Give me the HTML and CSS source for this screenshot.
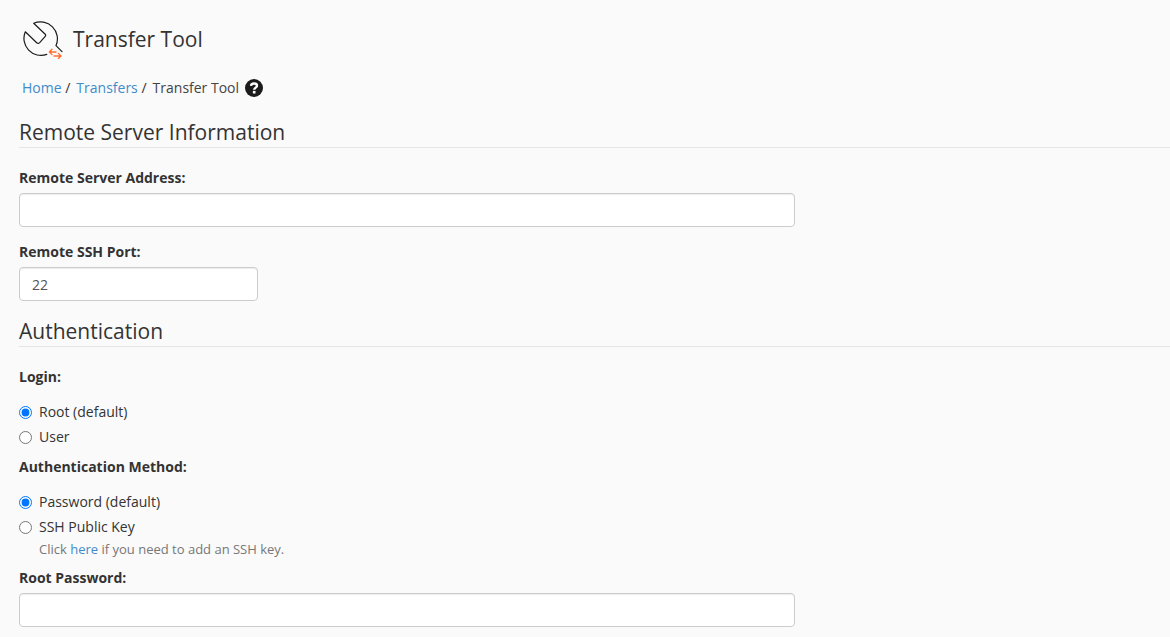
FILE: index.html
```html
<!DOCTYPE html>
<html lang="en">
<head>
<meta charset="utf-8">
<title>Transfer Tool</title>
<link rel="stylesheet" href="styles.css">
</head>
<body>
<main class="page">
  <header class="page-header">
    <svg class="page-icon" viewBox="0 -1 40 40" aria-hidden="true">
      <path class="wrench" d="M39 31.6L33 25.6A17 17 0 0 0 10.7 3.2L22.2 14.2Q23.2 15.5 22 16.7L16.7 22.6Q15.2 24 13.7 22.8L2.3 11.8A17 17 0 0 0 23.8 34.4"/>
      <path class="arrows" d="M33 32H26.8M29 29.2L26.4 32L29 34.6M31 36H37.6M35.4 33.4L38 36L35.4 38.4"/>
    </svg>
    <h1 class="page-title">Transfer Tool</h1>
  </header>
  <nav class="breadcrumb" aria-label="Breadcrumb">
    <span><a href="#">Home</a> /</span>
    <span><a href="#">Transfers</a> /</span>
    <span class="current">Transfer Tool</span>
    <a class="help-link" href="#" aria-label="Help">
      <svg class="help-icon" viewBox="0 0 18 18" aria-hidden="true">
        <circle cx="9" cy="9" r="9"/>
        <path d="M6 6.9C6.1 5.2 7.3 4.5 9 4.5C10.9 4.5 12 5.4 12 6.7C12 8.7 9.2 8.6 9.2 10.8"/>
        <rect x="7.9" y="11.9" width="2.6" height="2.6"/>
      </svg>
    </a>
  </nav>
  <form class="transfer-form">
    <section class="section">
      <h2 class="section-title">Remote Server Information</h2>
      <div class="field">
        <label class="label" for="host">Remote Server Address:</label>
        <input class="input" id="host" type="text">
      </div>
      <div class="field">
        <label class="label" for="port">Remote SSH Port:</label>
        <input class="input input-short" id="port" type="text" value="22">
      </div>
    </section>
    <section class="section">
      <h2 class="section-title">Authentication</h2>
      <fieldset class="choices">
        <legend class="label">Login:</legend>
        <label class="choice"><input type="radio" name="login" checked>Root (default)</label>
        <label class="choice"><input type="radio" name="login">User</label>
      </fieldset>
      <fieldset class="choices">
        <legend class="label">Authentication Method:</legend>
        <label class="choice"><input type="radio" name="method" checked>Password (default)</label>
        <label class="choice"><input type="radio" name="method">SSH Public Key</label>
        <p class="hint">Click <a href="#">here</a> if you need to add an SSH key.</p>
      </fieldset>
      <div class="field">
        <label class="label" for="password">Root Password:</label>
        <input class="input" id="password" type="password">
      </div>
    </section>
  </form>
</main>
</body>
</html>
```
FILE: styles.css
```css
* {
  box-sizing: border-box;
}

body {
  margin: 0;
  background: #fafafa;
  color: #333;
  font: 14px/20px "Open Sans", "Noto Sans", sans-serif;
}

a {
  color: #428bca;
  text-decoration: none;
}

.page {
  padding: 19px 0 0 19px;
}

.page-header {
  display: flex;
  align-items: center;
  gap: 10px;
  height: 40px;
  padding-left: 4px;
}

.page-icon {
  width: 40px;
  height: 40px;
  fill: none;
  stroke-linecap: round;
  stroke-linejoin: round;
}

.wrench {
  stroke: #1c1c1c;
  stroke-width: 1.2;
}

.arrows {
  stroke: #ff6c2c;
  stroke-width: 1.3;
}

.page-title {
  margin: 0;
  font-size: 21px;
  line-height: 30px;
  font-weight: 400;
}

.breadcrumb {
  display: flex;
  align-items: center;
  gap: 6px;
  margin: 19px 0;
  padding-left: 3px;
}

.current {
  color: #444;
}

.help-link {
  display: flex;
}

.help-icon {
  width: 18px;
  height: 18px;
  fill: #1c1c1c;
}

.help-icon path {
  fill: none;
  stroke: #fff;
  stroke-width: 2.4;
}

.help-icon rect {
  fill: #fff;
}

.section-title {
  margin: 0 0 20px;
  border-bottom: 1px solid #e5e5e5;
  font-size: 21px;
  line-height: 30px;
  font-weight: 400;
}

.field {
  margin-bottom: 15px;
}

.section:last-child .field {
  margin-bottom: 10px;
}

.label {
  display: block;
  margin-bottom: 5px;
  padding: 0;
  font-weight: 700;
}

.input {
  display: block;
  width: 67.4%;
  height: 34px;
  padding: 6px 12px;
  border: 1px solid #ccc;
  border-radius: 4px;
  background: #fff;
  box-shadow: inset 0 1px 1px rgba(0, 0, 0, 0.075);
  color: #555;
  font: inherit;
}

.input-short {
  width: 20.8%;
}

.choices {
  min-width: 0;
  margin: 0 0 10px;
  padding: 0;
  border: 0;
}

.choices .label {
  margin-bottom: 15px;
}

.choice {
  display: flex;
  align-items: flex-start;
  gap: 7px;
}

.choice + .choice {
  margin-top: 5px;
}

.choice input {
  width: 13px;
  height: 13px;
  margin: 4px 0 0;
}

.hint {
  margin: 3px 0 0 20px;
  color: #777;
  font-size: 13px;
  line-height: 18px;
}
```
